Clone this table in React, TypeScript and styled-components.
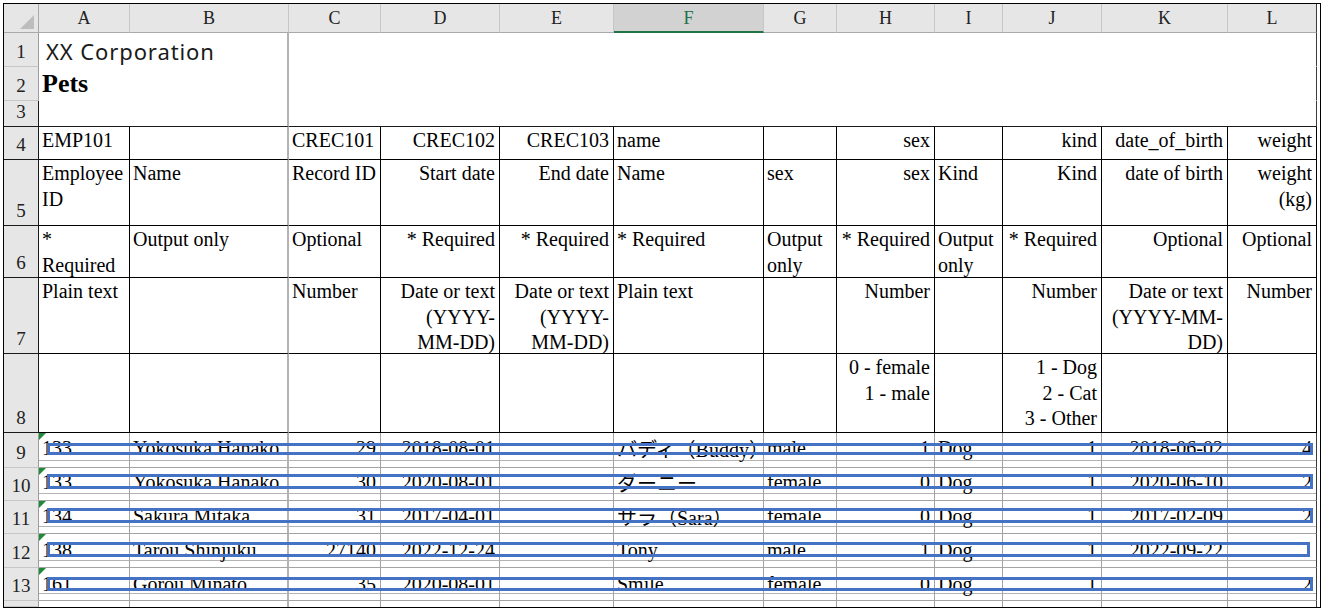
import React from "react";
import styled, { createGlobalStyle, css } from "styled-components";

const GlobalStyle = createGlobalStyle`
  html, body { margin: 0; padding: 0; background: #ffffff; }
  body { font-family: "Liberation Serif", "Noto Sans CJK JP", serif; color: #000; }
`;

const COLS = [91, 159, 92, 119, 114, 150, 73, 98, 68, 99, 126, 89];
const LETTERS = "ABCDEFGHIJKL".split("");
const ROWS = [34, 34, 26, 33, 66, 52, 76, 79, 35, 33, 33, 34, 33];
const SELECTED = "F";

type Align = "left" | "right";
type Zone = "top" | "freezeRow" | "form" | "data" | "tail";

const Page = styled.div`
  padding: 3px 0 0 3px;
`;

const Frame = styled.div`
  width: 1316px;
  height: 603px;
  border: 1px solid #000;
  background: #fff;
  overflow: hidden;
`;

const Sheet = styled.div`
  display: grid;
  width: 1313px;
  grid-template-columns: 35px ${COLS.map((c) => `${c}px`).join(" ")};
  grid-template-rows: 29px ${ROWS.map((r) => `${r}px`).join(" ")} 6px;
`;

const Corner = styled.div`
  background: #e6e6e6;
  border-right: 1px solid #a9a9a9;
  border-bottom: 1px solid #a9a9a9;
  box-sizing: border-box;
  display: flex;
  align-items: flex-end;
  justify-content: flex-end;
  padding: 0 4px 3px 0;
`;

const ColHead = styled.div<{ $sel?: boolean; $last?: boolean }>`
  box-sizing: border-box;
  background: ${(p) => (p.$sel ? "#d2d2d2" : "#e6e6e6")};
  border-right: 1px solid ${(p) => (p.$last ? "#3c3c3c" : "#c6c6c6")};
  border-bottom: ${(p) => (p.$sel ? "2px solid #217346" : "1px solid #a9a9a9")};
  color: ${(p) => (p.$sel ? "#217346" : "#222")};
  font-size: 18px;
  line-height: 20px;
  display: flex;
  align-items: flex-end;
  justify-content: center;
  padding-bottom: ${(p) => (p.$sel ? "3px" : "4px")};
`;

const RowHead = styled.div<{ $strong?: boolean; $r: number }>`
  grid-row: ${(p) => p.$r};
  grid-column: 1;
  box-sizing: border-box;
  background: #e6e6e6;
  border-right: 1px solid ${(p) => (p.$strong ? "#1a1a1a" : "#9c9c9c")};
  border-bottom: 1px solid ${(p) => (p.$strong ? "#1a1a1a" : "#c6c6c6")};
  color: #222;
  font-size: 19px;
  line-height: 20px;
  display: flex;
  align-items: flex-end;
  justify-content: center;
  padding-bottom: 4px;
`;

const zoneBorders = {
  top: css`
    border-bottom: 1px solid transparent;
  `,
  freezeRow: css`
    border-bottom: 1px solid #1a1a1a;
  `,
  form: css`
    border-right: 1px solid #000;
    border-bottom: 1px solid #000;
  `,
  data: css`
    border-right: 1px solid #a3a3a3;
    border-bottom: 1px solid #a3a3a3;
    background: linear-gradient(
      to top,
      transparent 6px,
      #b4b4b4 6px,
      #b4b4b4 7px,
      transparent 7px
    );
  `,
  tail: css`
    border-right: 1px solid #a3a3a3;
  `,
};

const Cell = styled.div<{
  $align?: Align;
  $zone: Zone;
  $freeze?: boolean;
  $last?: boolean;
  $r: number;
  $c: number;
  $pad?: number;
}>`
  grid-row: ${(p) => p.$r};
  grid-column: ${(p) => p.$c};
  box-sizing: border-box;
  position: relative;
  overflow: hidden;
  white-space: pre;
  font-size: 20px;
  line-height: 25.5px;
  padding: ${(p) => p.$pad ?? 1}px 4px 0 3px;
  text-align: ${(p) => (p.$align === "right" ? "right" : "left")};
  ${(p) => zoneBorders[p.$zone]}
  ${(p) =>
    p.$freeze &&
    css`
      border-right: 2px solid #b3b3b3;
    `}
  ${(p) =>
    p.$last &&
    css`
      border-right: 1px solid #3c3c3c;
    `}
`;

const Flagged = styled(Cell)`
  &::before {
    content: "";
    position: absolute;
    left: 0;
    top: 0;
    width: 0;
    height: 0;
    border-top: 7px solid #1f8a3a;
    border-right: 7px solid transparent;
  }
`;

const TitleCell = styled.div<{ $r: number }>`
  grid-row: ${(p) => p.$r};
  grid-column: 2 / span 2;
  box-sizing: border-box;
  border-right: 2px solid #b3b3b3;
  display: flex;
  align-items: flex-end;
  padding: 0 0 2px 7px;
  font-family: "Noto Sans", "Noto Sans CJK JP", sans-serif;
  font-size: 22px;
  letter-spacing: 0.9px;
  line-height: 28px;
  color: #1a1a1a;
  white-space: nowrap;
`;

const SubTitleCell = styled.div<{ $r: number }>`
  grid-row: ${(p) => p.$r};
  grid-column: 2 / span 2;
  box-sizing: border-box;
  border-right: 2px solid #b3b3b3;
  display: flex;
  align-items: flex-end;
  padding: 0 0 2px 3px;
  font-size: 26px;
  font-weight: bold;
  line-height: 30px;
  white-space: nowrap;
`;

const Band = styled.div<{ $r: number; $right: number; $top: number; $h: number }>`
  grid-row: ${(p) => p.$r};
  grid-column: 2 / -1;
  align-self: start;
  box-sizing: border-box;
  margin: ${(p) => p.$top}px ${(p) => p.$right}px 0 8px;
  height: ${(p) => p.$h}px;
  border: 3px solid #4472c4;
  pointer-events: none;
  z-index: 2;
`;

const Jp = styled.span`
  font-family: "Noto Sans CJK JP", sans-serif;
  font-size: 20px;
`;

const FORM: [string, Align][][] = [
  [
    ["EMP101", "left"], ["", "left"], ["CREC101", "left"], ["CREC102", "right"], ["CREC103", "right"],
    ["name", "left"], ["", "left"], ["sex", "right"], ["", "left"], ["kind", "right"],
    ["date_of_birth", "right"], ["weight", "right"],
  ],
  [
    ["Employee\nID", "left"], ["Name", "left"], ["Record ID", "left"], ["Start date", "right"],
    ["End date", "right"], ["Name", "left"], ["sex", "left"], ["sex", "right"], ["Kind", "left"],
    ["Kind", "right"], ["date of birth", "right"], ["weight\n(kg)", "right"],
  ],
  [
    ["*\nRequired", "left"], ["Output only", "left"], ["Optional", "left"], ["* Required", "right"],
    ["* Required", "right"], ["* Required", "left"], ["Output\nonly", "left"], ["* Required", "right"],
    ["Output\nonly", "left"], ["* Required", "right"], ["Optional", "right"], ["Optional", "right"],
  ],
  [
    ["Plain text", "left"], ["", "left"], ["Number", "left"], ["Date or text\n(YYYY-\nMM-DD)", "right"],
    ["Date or text\n(YYYY-\nMM-DD)", "right"], ["Plain text", "left"], ["", "left"], ["Number", "right"],
    ["", "left"], ["Number", "right"], ["Date or text\n(YYYY-MM-\nDD)", "right"], ["Number", "right"],
  ],
  [
    ["", "left"], ["", "left"], ["", "left"], ["", "right"], ["", "right"], ["", "left"], ["", "left"],
    ["0 - female\n1 - male", "right"], ["", "left"], ["1 - Dog\n2 - Cat\n3 - Other", "right"],
    ["", "right"], ["", "right"],
  ],
];

const DATA_ALIGN: Align[] = ["left", "left", "right", "right", "right", "left", "left", "right", "left", "right", "right", "right"];

const DATA: string[][] = [
  ["133", "Yokosuka Hanako", "29", "2018-08-01", "", "バディ（Buddy）", "male", "1", "Dog", "1", "2018-06-02", "4"],
  ["133", "Yokosuka Hanako", "30", "2020-08-01", "", "ダーニー", "female", "0", "Dog", "1", "2020-06-10", "2"],
  ["134", "Sakura Mitaka", "31", "2017-04-01", "", "サラ（Sara）", "female", "0", "Dog", "1", "2017-02-09", "2"],
  ["138", "Tarou Shinjuku", "27140", "2022-12-24", "", "Tony", "male", "1", "Dog", "1", "2022-09-22", ""],
  ["161", "Gorou Minato", "35", "2020-08-01", "", "Smile", "female", "0", "Dog", "1", "", "2"],
];

const ROW_META = [
  { pad: 3, top: 10, h: 12, right: 4 },
  { pad: 2, top: 6, h: 15, right: 4 },
  { pad: 3, top: 7, h: 15, right: 4 },
  { pad: 4, top: 8, h: 15, right: 7 },
  { pad: 4, top: 9, h: 14, right: 4 },
];

function renderMixed(text: string) {
  const parts = text.split(/([\u3000-\u30ff\uff00-\uffef]+)/);
  return parts.map((p, i) =>
    /[\u3000-\u30ff\uff00-\uffef]/.test(p) ? <Jp key={i}>{p}</Jp> : <React.Fragment key={i}>{p}</React.Fragment>
  );
}

const CornerMark = () => (
  <svg width="14" height="14" viewBox="0 0 14 14">
    <polygon points="14,0 14,14 0,14" fill="#bdbdbd" />
  </svg>
);

export default function App() {
  return (
    <Page>
      <GlobalStyle />
      <Frame>
        <Sheet>
          <Corner>
            <CornerMark />
          </Corner>
          {LETTERS.map((l, i) => (
            <ColHead key={l} $sel={l === SELECTED} $last={i === LETTERS.length - 1}>
              {l}
            </ColHead>
          ))}

          <RowHead $r={2}>1</RowHead>
          <TitleCell $r={2}>XX Corporation</TitleCell>
          {LETTERS.slice(2).map((l, i) => (
            <Cell key={`r1${l}`} $r={2} $c={i + 4} $zone="top" $last={i === 9} />
          ))}

          <RowHead $r={3}>2</RowHead>
          <SubTitleCell $r={3}>Pets</SubTitleCell>
          {LETTERS.slice(2).map((l, i) => (
            <Cell key={`r2${l}`} $r={3} $c={i + 4} $zone="top" $last={i === 9} />
          ))}

          <RowHead $r={4} $strong>3</RowHead>
          {LETTERS.map((l, i) => (
            <Cell key={`r3${l}`} $r={4} $c={i + 2} $zone="freezeRow" $freeze={i === 1} $last={i === 11} />
          ))}

          {FORM.map((row, r) => (
            <React.Fragment key={`f${r}`}>
              <RowHead $r={r + 5} $strong>{r + 4}</RowHead>
              {row.map(([txt, al], c) => (
                <Cell key={`f${r}${c}`} $r={r + 5} $c={c + 2} $zone="form" $align={al} $freeze={c === 1}>
                  {txt}
                </Cell>
              ))}
            </React.Fragment>
          ))}

          {DATA.map((row, r) => (
            <React.Fragment key={`d${r}`}>
              <RowHead $r={r + 10}>{r + 9}</RowHead>
              {row.map((txt, c) =>
                c === 0 ? (
                  <Flagged
                    key={`d${r}${c}`}
                    $r={r + 10}
                    $c={c + 2}
                    $zone="data"
                    $align={DATA_ALIGN[c]}
                    $pad={ROW_META[r].pad}
                  >
                    {txt}
                  </Flagged>
                ) : (
                  <Cell
                    key={`d${r}${c}`}
                    $r={r + 10}
                    $c={c + 2}
                    $zone="data"
                    $align={DATA_ALIGN[c]}
                    $freeze={c === 1}
                    $last={c === 11}
                    $pad={ROW_META[r].pad}
                  >
                    {renderMixed(txt)}
                  </Cell>
                )
              )}
              <Band $r={r + 10} $top={ROW_META[r].top} $h={ROW_META[r].h} $right={ROW_META[r].right} />
            </React.Fragment>
          ))}

          <RowHead $r={15} />
          {LETTERS.map((l, i) => (
            <Cell key={`t${l}`} $r={15} $c={i + 2} $zone="tail" $freeze={i === 1} $last={i === 11} />
          ))}
        </Sheet>
      </Frame>
    </Page>
  );
}
